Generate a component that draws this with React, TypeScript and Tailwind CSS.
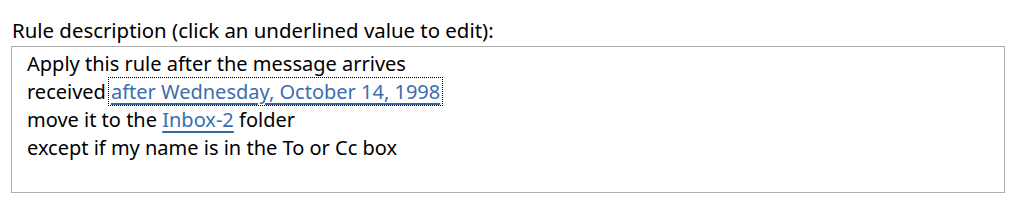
import React from "react";

export default function App() {
  const font = { fontFamily: '"Noto Sans", "Open Sans", sans-serif' };
  return (
    <div className="w-[1024px] h-[215px] bg-white text-black" style={font}>
      <div className="pl-[11px] pr-[19px] pt-[17px]">
        <div className="pl-[1px] text-[20.4px] leading-[26px] text-black">
          Rule description (click an underlined value to edit):
        </div>
        <div className="mt-[3px] h-[147px] border border-[#adadad] pl-[15px] pt-[3px] text-[20px] leading-[28px] text-black">
          <div>Apply this rule after the message arrives</div>
          <div>
            received
            <span className="ml-[3px] outline outline-1 outline-dotted outline-black pl-[2px] pr-[2px] text-[#3b6db0] underline decoration-2 decoration-[#37659f] underline-offset-[4px]">
              after Wednesday, October 14, 1998
            </span>
          </div>
          <div>
            move it to the{" "}
            <span className="text-[#3b6db0] underline decoration-2 decoration-[#37659f] underline-offset-[4px]">
              Inbox-2
            </span>{" "}
            folder
          </div>
          <div>except if my name is in the To or Cc box</div>
        </div>
      </div>
    </div>
  );
}
